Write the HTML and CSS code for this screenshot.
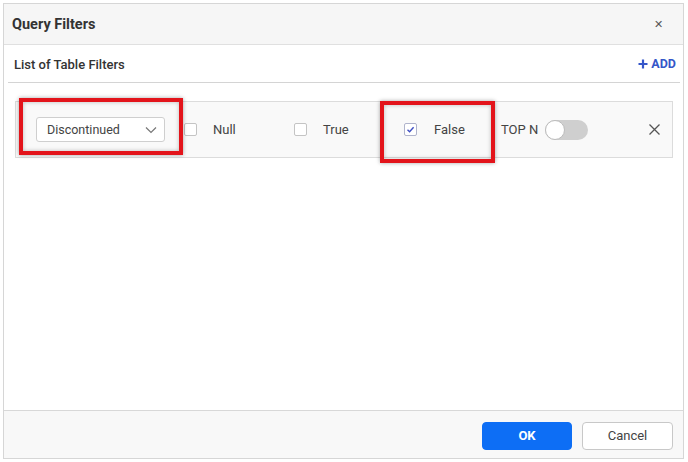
FILE: index.html
```html
<!DOCTYPE html>
<html>
<head>
<meta charset="utf-8">
<link rel="stylesheet" href="styles.css">
</head>
<body>
<div class="dialog">
  <div class="header">
    <span class="title">Query Filters</span>
    <span class="close">&#x2715;</span>
  </div>
  <div class="content">
    <div class="list-head">
      <span class="list-title">List of Table Filters</span>
      <span class="add"><svg width="10" height="10" viewBox="0 0 10 10"><path d="M5 0.5V9.5M0.5 5H9.5" stroke="#3556c9" stroke-width="2.2"/></svg>ADD</span>
    </div>
    <div class="filter-row">
      <div class="dropdown">
        <span>Discontinued</span>
        <svg width="12" height="8" viewBox="0 0 12 8"><path d="M1 1.5L6 6.5L11 1.5" fill="none" stroke="#777" stroke-width="1.2"/></svg>
      </div>
      <div class="check-group g1"><span class="box"></span><span class="label">Null</span></div>
      <div class="check-group g2"><span class="box"></span><span class="label">True</span></div>
      <div class="check-group g3"><span class="box checked"><svg width="11" height="11" viewBox="0 0 11 11"><path d="M2.5 5.8L4.6 7.8L8.6 3.2" fill="none" stroke="#3f4fc4" stroke-width="1.4"/></svg></span><span class="label">False</span></div>
      <div class="topn">
        <span class="label">TOP N</span>
        <span class="toggle"><span class="knob"></span></span>
      </div>
      <svg class="remove" width="11" height="11" viewBox="0 0 11 11"><path d="M0.5 0.5L10.5 10.5M10.5 0.5L0.5 10.5" stroke="#555" stroke-width="1.3"/></svg>
    </div>
  </div>
  <div class="footer">
    <button class="btn ok">OK</button>
    <button class="btn cancel">Cancel</button>
  </div>
</div>
<div class="mark mark1"></div>
<div class="mark mark2"></div>
</body>
</html>
```

FILE: styles.css
```css
html, body {
  margin: 0;
  padding: 0;
  background: #ffffff;
}
body {
  padding: 3px;
  font-family: Roboto, "Liberation Sans", Arial, sans-serif;
  color: #333;
  position: relative;
  width: 688px;
  height: 462px;
  box-sizing: border-box;
  overflow: hidden;
}
.dialog {
  width: 681px;
  height: 456px;
  box-sizing: border-box;
  border: 1px solid #d6d6d6;
  display: flex;
  flex-direction: column;
  background: #fff;
}
.header {
  height: 41px;
  box-sizing: border-box;
  background: #f6f6f6;
  border-bottom: 1px solid #e0e0e0;
  display: flex;
  align-items: center;
  justify-content: space-between;
  padding: 0 20px 0 8px;
}
.title {
  font-size: 14.5px;
  font-weight: 700;
  color: #333;
}
.close {
  font-size: 11px;
  color: #555;
}
.content {
  flex: 1;
  padding: 0 3px 0 4px;
}
.list-head {
  height: 38px;
  box-sizing: border-box;
  border-bottom: 1px solid #d4d4d4;
  display: flex;
  align-items: center;
  justify-content: space-between;
  padding: 2px 4px 0 6px;
}
.list-title {
  font-size: 13px;
  font-weight: 500;
  color: #333;
}
.add {
  font-size: 12.5px;
  font-weight: 700;
  color: #3556c9;
  display: flex;
  align-items: center;
  gap: 3px;
  margin-top: -2px;
}
.filter-row {
  margin: 18px 7px 0 7px;
  height: 57px;
  box-sizing: border-box;
  border: 1px solid #dcdcdc;
  background: #f9f9f9;
  display: flex;
  align-items: center;
  padding-left: 20px;
}
.dropdown {
  width: 129px;
  height: 25px;
  box-sizing: border-box;
  border: 1px solid #cfcfcf;
  border-radius: 3px;
  background: #fff;
  display: flex;
  align-items: center;
  justify-content: space-between;
  padding: 0 7px 0 10px;
  font-size: 12.5px;
  color: #444;
}
.check-group {
  display: flex;
  align-items: center;
  width: 110px;
}
.g1 { margin-left: 19px; }
.g3 { width: 97px; }
.box {
  width: 13px;
  height: 13px;
  box-sizing: border-box;
  border: 1px solid #c4c4c4;
  border-radius: 2px;
  background: #fff;
  display: flex;
  align-items: center;
  justify-content: center;
}
.box.checked {
  border-color: #b0b4cc;
}
.label {
  font-size: 13px;
  color: #444;
  margin-left: 16px;
}
.g3 .label { margin-left: 17px; }
.topn {
  display: flex;
  align-items: center;
  width: 148px;
}
.topn .label {
  margin-left: 0;
}
.toggle {
  margin-left: 7px;
  width: 43px;
  height: 20px;
  border-radius: 10px;
  background: #cfcfcf;
  position: relative;
}
.knob {
  position: absolute;
  left: 0;
  top: 0;
  width: 20px;
  height: 20px;
  box-sizing: border-box;
  border-radius: 50%;
  background: #fff;
  border: 1px solid #bcbcbc;
}
.remove {
  margin-left: 0;
}
.footer {
  height: 48px;
  box-sizing: border-box;
  border-top: 1px solid #d8d8d8;
  background: #f8f8f8;
  display: flex;
  align-items: center;
  justify-content: flex-end;
  gap: 10px;
  padding: 2px 10px 0 0;
}
.btn {
  height: 28px;
  border-radius: 4px;
  font-family: Roboto, "Liberation Sans", Arial, sans-serif;
  font-size: 13px;
  box-sizing: border-box;
}
.ok {
  width: 90px;
  background: #0d6ef5;
  border: 1px solid #0d6ef5;
  color: #fff;
  font-weight: 700;
}
.cancel {
  width: 91px;
  background: #fff;
  border: 1px solid #c8c8c8;
  color: #444;
}
.mark {
  position: absolute;
  border: 4px solid #e3141b;
  box-sizing: border-box;
  box-shadow: 0 0 4px rgba(0,0,0,0.35), inset 0 0 4px rgba(0,0,0,0.25);
}
.mark1 {
  left: 19px;
  top: 98px;
  width: 164px;
  height: 57px;
}
.mark2 {
  left: 380px;
  top: 101px;
  width: 115px;
  height: 62px;
}
```
